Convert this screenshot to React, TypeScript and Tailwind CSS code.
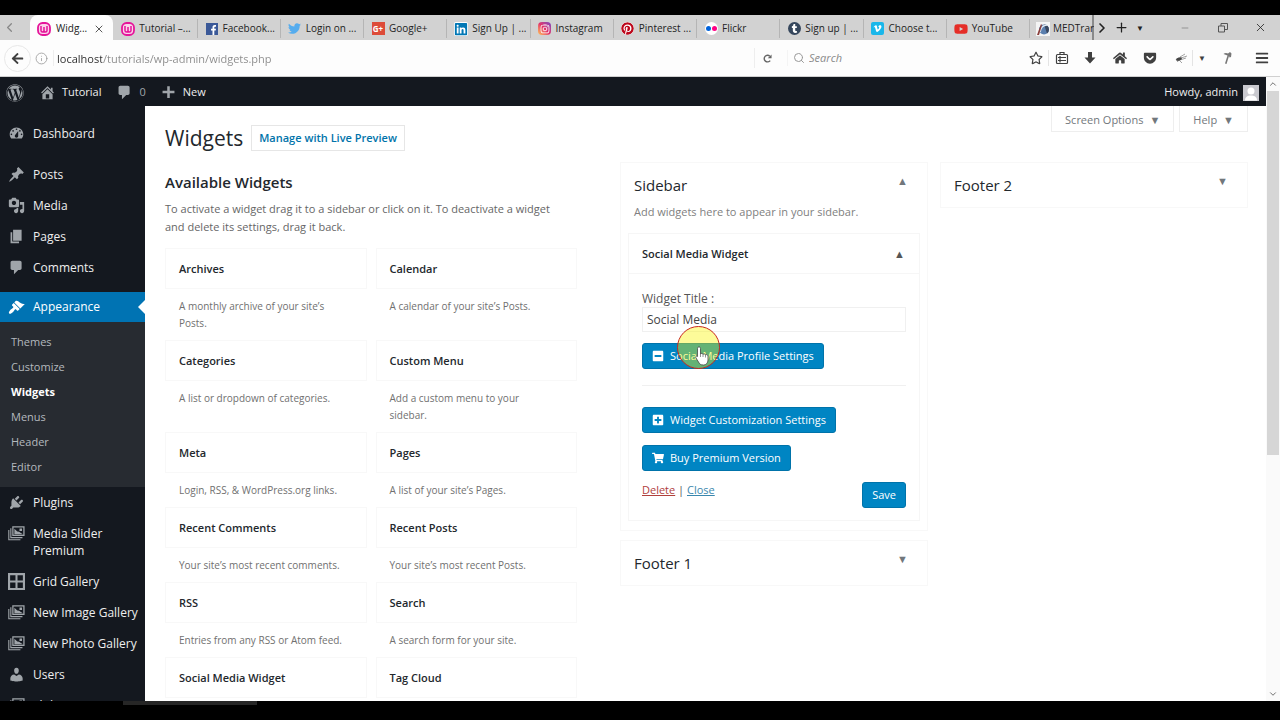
import React, { useState } from "react";
import {
  FaArrowLeft,
  FaBars,
  FaGetPocket,
  FaHome,
  FaInstagram,
  FaLinkedin,
  FaMinusSquare,
  FaPinterest,
  FaPlusSquare,
  FaRegStar,
  FaShoppingCart,
  FaTumblr,
  FaTwitter,
  FaVimeoV,
  FaWordpress,
  FaYoutube,
} from "react-icons/fa";
import { ChevronLeft, ChevronRight, ChevronUp, ChevronDown, Info, Minus, Plus, Search, X } from "lucide-react";

const paths = {
  dashboard:
    "M3.76 16h12.48c1.1-1.37 1.76-3.11 1.76-5 0-4.42-3.58-8-8-8s-8 3.58-8 8c0 1.89.66 3.63 1.76 5zM10 4c.55 0 1 .45 1 1s-.45 1-1 1-1-.45-1-1 .45-1 1-1zM6 6c.55 0 1 .45 1 1s-.45 1-1 1-1-.45-1-1 .45-1 1-1zm8 0c.55 0 1 .45 1 1s-.45 1-1 1-1-.45-1-1 .45-1 1-1zm-5.37 5.55L12 7v6c0 1.1-.9 2-2 2s-2-.9-2-2c0-.57.24-1.08.63-1.45zM4 10c.55 0 1 .45 1 1s-.45 1-1 1-1-.45-1-1 .45-1 1-1zm12 0c.55 0 1 .45 1 1s-.45 1-1 1-1-.45-1-1 .45-1 1-1z",
  post: "M10.44 3.02l1.82-1.82 6.36 6.35-1.83 1.82c-1.05-.68-2.48-.57-3.41.36l-.75.75c-.92.93-1.04 2.35-.35 3.41l-1.83 1.82-2.41-2.41-2.8 2.79c-.42.42-3.38 2.71-3.8 2.29s1.86-3.39 2.28-3.81l2.79-2.79L4.1 9.36l1.83-1.82c1.05.69 2.48.57 3.4-.36l.75-.75c.93-.92 1.05-2.35.36-3.41z",
  media:
    "M13 11V4c0-.55-.45-1-1-1h-1.67L9 1H5L3.67 3H2c-.55 0-1 .45-1 1v7c0 .55.45 1 1 1h10c.55 0 1-.45 1-1zM7 4.5c1.38 0 2.5 1.12 2.5 2.5S8.38 9.5 7 9.5 4.5 8.38 4.5 7 5.62 4.5 7 4.5zM14 6h5v10.5c0 1.38-1.12 2.5-2.5 2.5S14 17.88 14 16.5s1.12-2.5 2.5-2.5c.17 0 .34.02.5.05V9h-3V6zm-4 8.05V13h2v3.5c0 1.38-1.12 2.5-2.5 2.5S7 17.88 7 16.5 8.12 14 9.5 14c.17 0 .34.02.5.05z",
  page: "M6 15V2h10v13H6zm-1 1h8v2H3V5h2v11z",
  comment: "M5 2h9c1.1 0 2 .9 2 2v7c0 1.1-.9 2-2 2h-2l-5 5v-5H5c-1.1 0-2-.9-2-2V4c0-1.1.9-2 2-2z",
  appearance:
    "M14.48 11.06L7.41 3.99l1.5-1.5c.5-.56 2.3-.47 3.51.32 1.21.8 1.43 1.28 2.91 2.1 1.18.64 2.45 1.26 4.45.85zm-.71.71L6.7 4.7 4.93 6.47c-.39.39-.39 1.02 0 1.41l1.06 1.06c.39.39.39 1.03 0 1.42-.6.6-1.43 1.11-2.21 1.69-.35.26-.7.53-1.01.84C1.43 14.23.4 16.08 1.4 17.07c.99 1 2.84-.03 4.18-1.36.31-.31.58-.66.85-1.02.57-.78 1.08-1.61 1.69-2.21.39-.39 1.02-.39 1.41 0l1.06 1.06c.39.39 1.02.39 1.41 0z",
  plugins:
    "M13.11 4.36L9.87 7.6 8 5.73l3.24-3.24c.35-.34 1.05-.2 1.56.32.52.51.66 1.21.31 1.55zm-8 1.77l.91-1.12 9.01 9.01-1.19.84c-.71.71-2.63 1.16-3.82 1.16H6.14L4.9 17.26c-.59.59-1.54.59-2.12 0-.59-.58-.59-1.53 0-2.12l1.24-1.24v-3.88c0-1.13.4-3.19 1.09-3.89zm7.26 3.97l3.24-3.24c.34-.35 1.04-.21 1.55.31.52.51.66 1.21.31 1.55l-3.24 3.25z",
  images:
    "M5 1.500h14.500v11.500H5V1.500zm1.500 1.500v8.500H18V3H6.500zM7.500 4.500l3.500 3 2 .3 4.500 3H7.500V4.500zM13.500 4h3v3h-3V4zM2.700 3.700H4V14.200h13v1.300H2.700V3.700zM.3 6h1.300v10.700h13V18H.3V6z",
  grid: "M0 0h20v20H0V0zm2.500 2.500v6.300h6.300V2.500H2.500zm8.700 0v6.300h6.300V2.500h-6.300zM2.500 11.200v6.300h6.300v-6.300H2.500zm8.700 0v6.300h6.300v-6.300h-6.300z",
  users:
    "M10 9.25c-2.27 0-2.73-3.44-2.73-3.44C7 4.02 7.82 2 9.97 2c2.16 0 2.98 2.02 2.71 3.81 0 0-.41 3.44-2.68 3.44zm0 2.57L12.72 10c2.39 0 4.52 2.33 4.52 4.53v2.49s-3.65 1.13-7.24 1.13c-3.65 0-7.24-1.13-7.24-1.13v-2.49c0-2.25 1.94-4.48 4.47-4.48z",
  home: "M16 8.500l1.530 1.530-1.060 1.060L10 4.600l-6.470 6.490-1.060-1.060L10 2.500l4 4v-2h2v4zm-6-2.460l6 5.990V18H4v-5.970zM12 17v-5H8v5h4z",
  plus: "M17 8v3h-5.500v5.500h-3V11H3V8h5.500V2.500h3V8H17z",
};

type IconName = keyof typeof paths;

const AdminIcon = ({ name, className = "" }: { name: IconName; className?: string }) => (
  <svg viewBox="0 0 20 20" className={`size-[17px] shrink-0 ${className}`} fill="currentColor" fillRule="evenodd">
    <path d={paths[name]} />
  </svg>
);

/* ---------- Browser ---------- */

const WampIcon = () => (
  <svg viewBox="0 0 14 14" className="size-[14px] shrink-0">
    <rect x="1" y="1" width="12" height="12" rx="4.500" fill="#fbd3ea" stroke="#e5149a" strokeWidth="1.800" />
    <path d="M4 4v4.500c0 2 3 2 3 0V5v3.500c0 2 3 2 3 0V4" fill="none" stroke="#e5149a" strokeWidth="1.500" />
  </svg>
);

const FacebookIcon = () => (
  <svg viewBox="0 0 12 12" className="size-[12px]">
    <rect width="12" height="12" fill="#3b5998" />
    <path d="M6.500 12V7.500H5V5.700h1.500V4.300c0-1.500 1-2.300 2.300-2.300H10v1.700h-.9c-.6 0-.8.3-.8.8v1.200H10l-.3 1.800H8.300V12z" fill="#fff" />
  </svg>
);

const GlobeIcon = () => (
  <svg viewBox="0 0 14 14" className="size-[14px]">
    <rect width="14" height="14" fill="#f4f4f4" />
    <circle cx="8" cy="7.500" r="5" fill="#5b7fae" />
    <path d="M8 2.500a5 5 0 0 1 5 5 5 5 0 0 1-2 4z" fill="#39475f" />
    <path d="M4 10C5 5 8 3 11 3" stroke="#dfe8f2" strokeWidth="1.500" fill="none" />
    <path d="M1 13L5 2l1 1-3 10z" fill="#8a3f3c" />
  </svg>
);

const tabs = [
  { title: "Tutorial –...", icon: <WampIcon /> },
  { title: "Facebook...", icon: <FacebookIcon /> },
  { title: "Login on ...", icon: <FaTwitter className="size-[13px] text-[#55acee]" /> },
  { title: "Google+", icon: <span className="grid size-[13px] place-items-center bg-[#dd4b39] text-[8px] font-bold text-white">G+</span> },
  { title: "Sign Up | ...", icon: <FaLinkedin className="size-[14px] rounded-xs bg-white text-[#0077b5]" /> },
  {
    title: "Instagram",
    icon: (
      <span className="grid size-[13px] place-items-center rounded-sm bg-linear-to-tr from-[#fdc04f] via-[#e1306c] to-[#7a3bc0]">
        <FaInstagram className="size-[10px] text-white" />
      </span>
    ),
  },
  { title: "Pinterest ...", icon: <FaPinterest className="size-[13px] rounded-full bg-white text-[#bd081c]" /> },
  {
    title: "Flickr",
    icon: (
      <span className="flex size-[13px] items-center justify-center gap-px rounded-full bg-white">
        <i className="size-[5px] rounded-full bg-[#0063dc]" />
        <i className="size-[5px] rounded-full bg-[#ff0084]" />
      </span>
    ),
  },
  {
    title: "Sign up | ...",
    icon: (
      <span className="grid size-[13px] place-items-center rounded-full bg-[#35465c]">
        <FaTumblr className="size-[9px] text-white" />
      </span>
    ),
  },
  {
    title: "Choose t...",
    icon: (
      <span className="grid size-[13px] place-items-center rounded-xs bg-[#1ab7ea]">
        <FaVimeoV className="size-[9px] text-white" />
      </span>
    ),
  },
  { title: "YouTube", icon: <FaYoutube className="size-[14px] text-[#e52d27]" /> },
];

const TabBar = () => (
  <div className="flex h-[25px] shrink-0 items-stretch bg-[#d2d2d2] text-[10px] text-[#222]">
    <button aria-label="Scroll tabs left" className="grid w-[30px] place-items-center pr-3 text-[#888]">
      <ChevronLeft size={15} />
    </button>
    <div className="flex min-w-0 flex-1 overflow-hidden">
      <div className="flex min-w-0 flex-1 items-center rounded-t-lg bg-[#fdfdfd] pt-[2px]">
        <span className="ml-[7px]"><WampIcon /></span>
        <span className="ml-[5px] flex-1 whitespace-nowrap">Widg...</span>
        <button aria-label="Close tab" className="mr-[8px]">
          <X size={12} strokeWidth={1.5} />
        </button>
      </div>
      {tabs.map((tab, index) => (
        <button key={tab.title} className="flex min-w-0 flex-1 items-center pt-[2px] text-left">
          <span className={`h-[19px] w-px shrink-0 ${index ? "bg-[#b5b5b5]" : ""}`} />
          <span className="ml-[7px] grid w-[14px] shrink-0 place-items-center">{tab.icon}</span>
          <span className="ml-[4px] whitespace-nowrap">{tab.title}</span>
        </button>
      ))}
      <button className="flex w-[65px] shrink-0 items-center border-r-2 border-[#8a8a8a] pt-[2px]">
        <span className="h-[19px] w-px shrink-0 bg-[#b5b5b5]" />
        <span className="ml-[6px] shrink-0">
          <GlobeIcon />
        </span>
        <span className="ml-[3px] whitespace-nowrap">MEDTrar</span>
      </button>
    </div>
    <div className="flex w-[186px] shrink-0 items-center">
      <button aria-label="Scroll tabs right"><ChevronRight size={16} strokeWidth={2.5} /></button>
      <button aria-label="New tab" className="ml-1"><Plus size={15} strokeWidth={2} /></button>
      <button aria-label="List all tabs" className="ml-[7px] text-[8px]">▼</button>
      <button aria-label="Minimize" className="ml-[36px] text-[#888]"><Minus size={10} strokeWidth={2} /></button>
      <button aria-label="Restore" className="ml-[28px]">
        <svg viewBox="0 0 10 10" className="size-[10px]" fill="none" stroke="#555">
          <path d="M.5 3h6v6h-6zM3 3V.5h6.500v6H7" />
        </svg>
      </button>
      <button aria-label="Close window" className="ml-[26px]"><X size={13} strokeWidth={1.5} /></button>
    </div>
  </div>
);

const NavBar = () => (
  <div className="flex h-[37px] shrink-0 items-center border-b border-[#d0d0d0] bg-[#fdfdfd] text-[#404040]">
    <button aria-label="Back" className="ml-[4px] grid size-[27px] place-items-center rounded-full border border-[#e8e8e8]">
      <FaArrowLeft size={13} />
    </button>
    <Info size={13} strokeWidth={1.5} className="ml-[4px] text-[#999]" />
    <span className="ml-[5px] h-4 w-px bg-[#eee]" />
    <input
      aria-label="Address"
      defaultValue="localhost/tutorials/wp-admin/widgets.php"
      className="ml-[3px] h-[20px] min-w-0 flex-1 bg-[linear-gradient(90deg,#2a2a2a_45px,#8a8a8a_45px)] bg-clip-text text-[11px] text-transparent outline-none"
    />
    <button aria-label="Reload" className="grid h-5 w-[26px] place-items-center border-l border-[#eee]">
      <svg viewBox="0 0 10 10" className="size-[9px]" fill="none" stroke="#666" strokeWidth="1.600">
        <path d="M8 7.300A3.700 3.700 0 1 1 7.600 2.400" />
        <path d="M9.500.5v4.200H5.300z" fill="#666" stroke="none" />
      </svg>
    </button>
    <div className="ml-[7px] flex w-[242px] items-center gap-1 border-l border-[#f4f4f4] pl-[5px] text-[#999]">
      <Search size={12} />
      <input aria-label="Search" placeholder="Search" className="min-w-0 flex-1 text-[11px] placeholder:text-[#8a8a8a] placeholder:italic outline-none" />
    </div>
    <div className="flex shrink-0 items-center">
      <button aria-label="Bookmark"><FaRegStar size={14} /></button>
      <span className="ml-[5px] h-4 w-px bg-[#e4e4e4]" />
      <button aria-label="Library" className="ml-[6px]">
        <svg viewBox="0 0 14 14" className="size-[14px]" fill="none" stroke="currentColor" strokeWidth="1.200">
          <rect x="1.500" y="3.500" width="11" height="9" rx="1" />
          <path d="M5 3.500V1.500h4v2M3 6.500h8M3 9.500h8M5 5v6.500" />
        </svg>
      </button>
      <button aria-label="Downloads" className="ml-[15px]">
        <svg viewBox="0 0 12 12" className="size-[12px]" fill="currentColor">
          <path d="M4 0h4v5.500h3.500L6 11.500.5 5.500H4z" />
        </svg>
      </button>
      <button aria-label="Home" className="ml-[17px]"><FaHome size={14} /></button>
      <button aria-label="Pocket" className="ml-[16px]"><FaGetPocket size={14} /></button>
      <button aria-label="Firebug" className="ml-[17px]">
        <svg viewBox="0 0 14 12" className="h-[12px] w-[14px]" stroke="#999" fill="#444">
          <path d="M3 9l9-3M2 7l2 3M5 8l3 3M6 5l5-3M7 6l6-2" strokeWidth=".9" />
          <ellipse cx="5" cy="7" rx="3" ry="1.500" stroke="none" transform="rotate(-15 5 7)" />
        </svg>
      </button>
      <span className="ml-[4px] h-4 w-px bg-[#e4e4e4]" />
      <button aria-label="Firebug menu" className="ml-[5px] text-[8px]">▼</button>
      <button aria-label="Color picker" className="ml-[15px]">
        <svg viewBox="0 0 12 14" className="h-[14px] w-[12px]" fill="#777">
          <path d="M2.500 3C4 1.500 6 2 7 2.500L9 1l1.500 1.500L10 6 8.500 6.500 8 5 5.500 13l-1.500-.5L6.500 4.500z" />
        </svg>
      </button>
      <button aria-label="Open menu" className="mr-[11px] ml-[22px]"><FaBars size={14} /></button>
    </div>
  </div>
);

/* ---------- Admin ---------- */

const AdminBar = () => (
  <div className="flex h-[29px] shrink-0 items-center bg-[#14181f] pt-[2px] pl-[6px] text-[11px] text-[#eee]">
    <a href="#wp" aria-label="About WordPress" className="text-[#a0a5aa]"><FaWordpress size={18} /></a>
    <a href="#site" className="ml-[15px] flex items-center gap-[6px]">
      <AdminIcon name="home" className="text-[#a0a5aa]" />
      Tutorial
    </a>
    <a href="#comments" className="ml-[14px] flex items-center gap-[7px] text-[#a0a5aa]">
      <AdminIcon name="comment" />
      0
    </a>
    <a href="#new" className="ml-[14px] flex items-center gap-[6px]">
      <AdminIcon name="plus" className="text-[#a0a5aa]" />
      New
    </a>
    <a href="#profile" className="mr-[7px] ml-auto flex items-center gap-[5px]">
      Howdy, admin
      <svg viewBox="0 0 16 16" className="size-[16px]">
        <rect width="16" height="16" fill="#c9c9cf" />
        <circle cx="8" cy="6" r="3.500" fill="#fff" />
        <path d="M2 15.500c0-4 3-5 6-5s6 1 6 5z" fill="#fff" />
      </svg>
    </a>
  </div>
);

const MenuItem = ({ icon, children }: { icon: IconName; children: React.ReactNode }) => (
  <a href="#menu" className="flex items-start gap-[8px] py-[7px] pl-[8px] leading-[17px]">
    <AdminIcon name={icon} className="text-[#a0a5aa]" />
    <span className="whitespace-nowrap">{children}</span>
  </a>
);

const subMenu = ["Themes", "Customize", "Widgets", "Menus", "Header", "Editor"];

const AdminMenu = () => (
  <nav className="w-[145px] shrink-0 overflow-hidden bg-[#14181f] pt-[12px] text-[12px] text-[#eee]">
    <MenuItem icon="dashboard">Dashboard</MenuItem>
    <div className="h-[10px]" />
    <MenuItem icon="post">Posts</MenuItem>
    <MenuItem icon="media">Media</MenuItem>
    <MenuItem icon="page">Pages</MenuItem>
    <MenuItem icon="comment">Comments</MenuItem>
    <div className="h-[9px]" />
    <a href="#appearance" className="relative flex h-[30px] items-center gap-[8px] bg-[#0073b3] pl-[8px] text-white">
      <AdminIcon name="appearance" />
      Appearance
      <span className="absolute top-[8px] right-0 border-y-[7px] border-r-[7px] border-y-transparent border-r-white" />
    </a>
    <div className="bg-[#272b31] pt-[7px] pb-[8px] text-[11px] text-[#b4b9be]">
      {subMenu.map((item) => (
        <a
          key={item}
          href="#submenu"
          className={`block pl-[11px] leading-[25px] ${item === "Widgets" ? "font-bold text-white" : ""}`}
        >
          {item}
        </a>
      ))}
    </div>
    <MenuItem icon="plugins">Plugins</MenuItem>
    <MenuItem icon="images">Media Slider<br />Premium</MenuItem>
    <MenuItem icon="grid">Grid Gallery</MenuItem>
    <MenuItem icon="images">New Image Gallery</MenuItem>
    <MenuItem icon="images">New Photo Gallery</MenuItem>
    <MenuItem icon="users">Users</MenuItem>
    <MenuItem icon="images">Slider Responsive</MenuItem>
  </nav>
);

const widgets = [
  { name: "Archives", description: "A monthly archive of your site’s Posts." },
  { name: "Calendar", description: "A calendar of your site’s Posts." },
  { name: "Categories", description: "A list or dropdown of categories." },
  { name: "Custom Menu", description: "Add a custom menu to your sidebar." },
  { name: "Meta", description: "Login, RSS, & WordPress.org links." },
  { name: "Pages", description: "A list of your site’s Pages." },
  { name: "Recent Comments", description: "Your site’s most recent comments." },
  { name: "Recent Posts", description: "Your site’s most recent Posts." },
  { name: "RSS", description: "Entries from any RSS or Atom feed." },
  { name: "Search", description: "A search form for your site." },
  { name: "Social Media Widget" },
  { name: "Tag Cloud" },
];

const AvailableWidgets = () => (
  <section>
    <h2 className="mt-[8px] text-[15px] leading-[24px] font-semibold text-[#23282d]">Available Widgets</h2>
    <p className="mt-[6px] pr-[8px] text-[11px] leading-[18px] text-[#666]">
      To activate a widget drag it to a sidebar or click on it. To deactivate a widget and delete its settings, drag it back.
    </p>
    <div className="mt-[12px] grid grid-cols-2 gap-x-[9px]">
      {widgets.map((widget) => (
        <div key={widget.name}>
          <h3 className="h-[41px] border border-[#f8f8f8] px-[13px] text-[11px] leading-[40px] font-semibold text-[#23282d]">
            {widget.name}
          </h3>
          {widget.description && (
            <p className="pt-[9px] pr-[18px] pb-[8px] pl-[14px] text-[10px] leading-[17px] text-[#707070]">
              {widget.description}
            </p>
          )}
        </div>
      ))}
    </div>
  </section>
);

const PrimaryButton = ({ children, className = "" }: { children: React.ReactNode; className?: string }) => (
  <button
    className={`flex h-[26px] items-center gap-[6px] rounded-[3px] border border-[#0073aa] bg-[#0085c3] px-[9px] text-[11px] whitespace-nowrap text-white ${className}`}
  >
    {children}
  </button>
);

const ClickMarker = () => (
  <div className="pointer-events-none absolute -top-[17px] left-[35px] size-[43px] rounded-full border border-[#c8281e] bg-[#faf500]/40">
    <svg viewBox="0 0 16 20" className="absolute top-[19px] left-[16px] h-[20px] w-[16px]">
      <path
        d="M5 1c1 0 1.500.6 1.500 1.500V8c.5-1 2.500-.7 2.500.5.500-1 2.500-.7 2.500.500.500-.8 2.500-.5 2.500 1V14c0 3-2 5-4.500 5-3 0-4-1-5-3L2 12c-.8-1.500.6-2.500 1.500-1.500V2.500C3.500 1.600 4 1 5 1z"
        fill="#fff"
        stroke="#444"
        strokeWidth=".8"
      />
      <path d="M6.500 8v3M9 8.500V11M11.500 9v2.500" stroke="#666" strokeWidth=".7" />
    </svg>
  </div>
);

const SidebarArea = () => {
  const [title, setTitle] = useState("Social Media");
  return (
    <section className="border border-[#f8f8f8] px-[7px] pb-[9px]">
      <div className="flex justify-between pt-[10px] pr-[12px] pl-[6px]">
        <h3 className="text-[15px] leading-[24px] font-medium text-[#23282d]">Sidebar</h3>
        <button aria-label="Collapse Sidebar" className="h-4 text-[11px] leading-4 text-[#72777c]">▲</button>
      </div>
      <p className="pt-[2px] pl-[6px] text-[11px] leading-[26px] text-[#808080]">Add widgets here to appear in your sidebar.</p>
      <div className="mt-[8px] border border-[#f6f6f6]">
        <div className="flex h-[40px] items-center justify-between border-b border-[#f6f6f6] pt-[2px] pr-[14px] pl-[13px]">
          <h4 className="text-[11px] font-semibold text-[#23282d]">Social Media Widget</h4>
          <button aria-label="Collapse widget" className="text-[11px] text-[#555]">▲</button>
        </div>
        <form className="px-[13px] pt-[16px] pb-[12px]" onSubmit={(e) => e.preventDefault()}>
          <label htmlFor="widget-title" className="block text-[12px] leading-[17px] text-[#555]">Widget Title :</label>
          <input
            id="widget-title"
            value={title}
            onChange={(e) => setTitle(e.target.value)}
            className="block h-[25px] w-full border border-[#f0f0f0] px-[4px] text-[12px] text-[#444] outline-none"
          />
          <div className="relative mt-[11px] w-fit">
            <PrimaryButton><FaMinusSquare size={12} /> Social Media Profile Settings</PrimaryButton>
            <ClickMarker />
          </div>
          <hr className="mt-[16px] mb-[21px] border-[#f0f0f0]" />
          <PrimaryButton><FaPlusSquare size={12} /> Widget Customization Settings</PrimaryButton>
          <PrimaryButton className="mt-[12px]"><FaShoppingCart size={12} /> Buy Premium Version</PrimaryButton>
          <div className="mt-[11px] flex justify-between">
            <p className="text-[11px] leading-[16px] text-[#555]">
              <a href="#delete" className="text-[#b0403c] underline">Delete</a> |{" "}
              <a href="#close" className="text-[#3a87ad] underline">Close</a>
            </p>
            <PrimaryButton>Save</PrimaryButton>
          </div>
        </form>
      </div>
    </section>
  );
};

const FooterArea = ({ title }: { title: string }) => (
  <section className="flex h-[46px] justify-between border border-[#f8f8f8] pt-[10px] pr-[19px] pl-[13px]">
    <h3 className="text-[15px] leading-[24px] font-medium text-[#23282d]">{title}</h3>
    <button aria-label={`Expand ${title}`} className="h-4 text-[11px] leading-4 text-[#72777c]">▼</button>
  </section>
);

const ScreenTab = ({ children }: { children: React.ReactNode }) => (
  <button className="flex h-[26px] items-center gap-[6px] border border-t-0 border-[#eee] px-[13px] pt-[3px] text-[11px] text-[#72777c]">
    {children} <span>▼</span>
  </button>
);

const Content = () => (
  <main className="min-w-0 flex-1 overflow-hidden bg-white pr-[18px] pl-[20px]">
    <div className="flex h-[47px] items-start justify-between">
      <div className="flex items-center gap-[8px] pt-[18px]">
        <h1 className="text-[21px] leading-[28px] text-[#23282d]">Widgets</h1>
        <a href="#preview" className="flex h-[26px] items-center border border-[#e6e6e6] px-[7px] text-[11px] font-semibold text-[#0073aa]">
          Manage with Live Preview
        </a>
      </div>
      <div className="flex gap-[5px]">
        <ScreenTab>Screen Options</ScreenTab>
        <ScreenTab>Help</ScreenTab>
      </div>
    </div>
    <div className="mt-[9px] grid grid-cols-[412fr_628fr] gap-[43px]">
      <AvailableWidgets />
      <div className="grid grid-cols-2 items-start gap-3">
        <div className="flex flex-col gap-[9px]">
          <SidebarArea />
          <FooterArea title="Footer 1" />
        </div>
        <FooterArea title="Footer 2" />
      </div>
    </div>
  </main>
);

const Scrollbar = () => (
  <div className="flex w-[14px] shrink-0 flex-col items-center bg-[#fafafa] text-[#555]">
    <ChevronUp size={10} className="my-[2px]" />
    <div className="h-[364px] w-[12px] bg-[#d6d6d6]" />
    <ChevronDown size={10} className="mt-auto mb-[2px]" />
  </div>
);

export default function App() {
  return (
    <div className="flex h-screen flex-col overflow-hidden bg-black pt-[15px] font-['Open_Sans','Noto_Sans',sans-serif]">
      <TabBar />
      <NavBar />
      <div className="flex min-h-0 flex-1">
        <div className="flex min-w-0 flex-1 flex-col">
          <AdminBar />
          <div className="flex min-h-0 flex-1">
            <AdminMenu />
            <Content />
          </div>
        </div>
        <Scrollbar />
      </div>
      <footer className="h-[19px] shrink-0 pl-[123px]">
        <div className="h-[4px] w-[134px] bg-[#262626]" />
      </footer>
    </div>
  );
}
